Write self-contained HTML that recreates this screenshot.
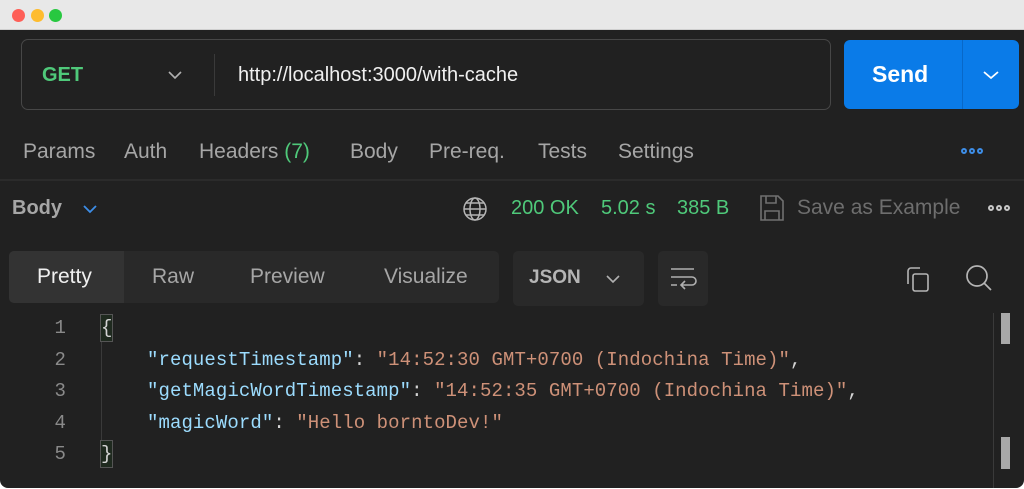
<!DOCTYPE html>
<html><head><meta charset="utf-8"><style>
*{margin:0;padding:0;box-sizing:border-box}
body{width:1024px;height:489px;background:#fff;font-family:"Liberation Sans",sans-serif;overflow:hidden;position:relative}
.title{position:absolute;left:0;top:0;width:1024px;height:30px;background:#e8e8e8;border-bottom:1px solid #cfcfcf}
.dot{position:absolute;top:9px;width:13px;height:13px;border-radius:50%}
.main{position:absolute;left:0;top:30px;width:1024px;height:458px;background:#212121;border-radius:0 0 8px 8px}
.a{position:absolute;white-space:nowrap}
.url{left:21px;top:9px;width:810px;height:71px;border:1px solid #474747;border-radius:7px}
.send{left:844px;top:10px;width:175px;height:69px;background:#0a7be8;border-radius:6px}
.tab{top:110px;font-size:21px;color:#a6a6a6}
.code{font-family:"Liberation Mono",monospace;font-size:19px;letter-spacing:0.08px}
.ln{color:#8a8a8a;width:40px;text-align:right;left:26px}
.k{color:#9cdcfe}.s{color:#ce9178}.p{color:#d4d4d4}
.o{position:absolute;width:6px;height:6px;border:2px solid;border-radius:50%}
</style></head><body>
<div class="title">
<div class="dot" style="left:12px;background:#fe5f57"></div>
<div class="dot" style="left:31px;background:#febc2e"></div>
<div class="dot" style="left:49px;background:#28c840"></div>
</div>
<div class="main">
<div class="a url">
 <div class="a" style="left:20px;top:24px;font-size:20px;font-weight:bold;color:#4fc97a">GET</div>
 <svg class="a" style="left:145px;top:30px" width="16" height="10"><path d="M2 2l6 6 6-6" stroke="#b0b0b0" stroke-width="1.6" fill="none"/></svg>
 <div class="a" style="left:192px;top:14px;width:1px;height:42px;background:#3a3a3a"></div>
 <div class="a" style="left:216px;top:24px;font-size:20px;color:#f0f0f0">http://localhost:3000/with-cache</div>
</div>
<div class="a send">
 <div class="a" style="left:28px;top:21px;font-size:23px;font-weight:bold;color:#fff">Send</div>
 <div class="a" style="left:118px;top:0;width:1px;height:69px;background:#0868c8"></div>
 <svg class="a" style="left:138px;top:30px" width="18" height="10"><path d="M2 2l7 6 7-6" stroke="#fff" stroke-width="1.8" fill="none"/></svg>
</div>
<div class="a tab" style="left:23px">Params</div>
<div class="a tab" style="left:124px">Auth</div>
<div class="a tab" style="left:199px">Headers <span style="color:#4fc97a">(7)</span></div>
<div class="a tab" style="left:350px">Body</div>
<div class="a tab" style="left:429px">Pre-req.</div>
<div class="a tab" style="left:538px">Tests</div>
<div class="a tab" style="left:618px">Settings</div>
<div class="o" style="left:961px;top:118px;color:#3d8ee8"></div><div class="o" style="left:969px;top:118px;color:#3d8ee8"></div><div class="o" style="left:977px;top:118px;color:#3d8ee8"></div>
<div class="a" style="left:0;top:149px;width:1024px;height:2px;background:#2b2b2b"></div>
<div class="a" style="left:12px;top:167px;font-size:20px;font-weight:bold;color:#a6a6a6">Body</div>
<svg class="a" style="left:82px;top:174px" width="16" height="10"><path d="M2 2l6 6 6-6" stroke="#3d8ee8" stroke-width="1.8" fill="none"/></svg>
<svg class="a" style="left:462px;top:166px" width="26" height="26" fill="none" stroke="#b5b5b5" stroke-width="1.5"><circle cx="13" cy="13" r="11"/><ellipse cx="13" cy="13" rx="5" ry="11"/><path d="M2 13h22M4 7h18M4 19h18"/></svg>
<div class="a" style="left:511px;top:167px;font-size:20px;color:#4fc97a">200 OK</div>
<div class="a" style="left:601px;top:167px;font-size:20px;color:#4fc97a">5.02 s</div>
<div class="a" style="left:677px;top:167px;font-size:20px;color:#4fc97a">385 B</div>
<svg class="a" style="left:759px;top:164px" width="26" height="28" fill="none" stroke="#707070" stroke-width="1.6"><path d="M2 2h17l5 5v19H2z"/><path d="M7 2v7h10V2M6 26v-9h14v9"/></svg>
<div class="a" style="left:797px;top:166px;font-size:21px;color:#6e6e6e">Save as Example</div>
<div class="o" style="left:988px;top:175px;color:#c8c8c8"></div><div class="o" style="left:996px;top:175px;color:#c8c8c8"></div><div class="o" style="left:1004px;top:175px;color:#c8c8c8"></div>
<div class="a" style="left:9px;top:221px;width:490px;height:52px;background:#292929;border-radius:5px;overflow:hidden">
 <div class="a" style="left:0;top:0;width:115px;height:52px;background:#333"></div>
 <div class="a" style="left:28px;top:14px;font-size:21px;color:#f0f0f0">Pretty</div>
 <div class="a" style="left:143px;top:14px;font-size:21px;color:#a6a6a6">Raw</div>
 <div class="a" style="left:241px;top:14px;font-size:21px;color:#a6a6a6">Preview</div>
 <div class="a" style="left:375px;top:14px;font-size:21px;color:#a6a6a6">Visualize</div>
</div>
<div class="a" style="left:513px;top:221px;width:131px;height:55px;background:#292929;border-radius:5px">
 <div class="a" style="left:16px;top:16px;font-size:19px;font-weight:bold;color:#b5b5b5">JSON</div>
 <svg class="a" style="left:92px;top:23px" width="16" height="10"><path d="M2 2l6 6 6-6" stroke="#b0b0b0" stroke-width="1.6" fill="none"/></svg>
</div>
<div class="a" style="left:658px;top:221px;width:50px;height:55px;background:#292929;border-radius:5px">
 <svg class="a" style="left:11px;top:15px" width="28" height="26" fill="none" stroke="#b0b0b0" stroke-width="1.6"><path d="M2 3h23M2 11h21a4 4 0 0 1 0 8h-10M16 15l-4 4 4 4M2 19h6"/></svg>
</div>
<svg class="a" style="left:904px;top:236px" width="28" height="28" fill="none" stroke="#b5b5b5" stroke-width="1.6"><path d="M4 18V5a3 3 0 0 1 3-3h9"/><rect x="9" y="8" width="15" height="17" rx="2"/></svg>
<svg class="a" style="left:964px;top:233px" width="30" height="30" fill="none" stroke="#b5b5b5" stroke-width="1.7"><circle cx="13" cy="13" r="10"/><path d="M20 20l7 7"/></svg>
<div class="a" style="left:100px;top:284px;width:13px;height:28px;border:1px solid #555;background:#1f2a1f"></div>
<div class="a" style="left:100px;top:410px;width:13px;height:28px;border:1px solid #555;background:#1f2a1f"></div>
<div class="a" style="left:101px;top:312px;width:1px;height:98px;background:#3a3a3a"></div>
<div class="a code ln" style="top:287px">1</div>
<div class="a code ln" style="top:319px">2</div>
<div class="a code ln" style="top:350px">3</div>
<div class="a code ln" style="top:382px">4</div>
<div class="a code ln" style="top:413px">5</div>
<div class="a code p" style="left:101px;top:287px">{</div>
<div class="a code" style="left:147px;top:319px"><span class="k">"requestTimestamp"</span><span class="p">: </span><span class="s">"14:52:30 GMT+0700 (Indochina Time)"</span><span class="p">,</span></div>
<div class="a code" style="left:147px;top:350px"><span class="k">"getMagicWordTimestamp"</span><span class="p">: </span><span class="s">"14:52:35 GMT+0700 (Indochina Time)"</span><span class="p">,</span></div>
<div class="a code" style="left:147px;top:382px"><span class="k">"magicWord"</span><span class="p">: </span><span class="s">"Hello borntoDev!"</span></div>
<div class="a code p" style="left:101px;top:413px">}</div>
<div class="a" style="left:993px;top:283px;width:1px;height:175px;background:#3a3a3a"></div>
<div class="a" style="left:1001px;top:283px;width:9px;height:31px;background:#a8a8a8"></div>
<div class="a" style="left:1001px;top:407px;width:9px;height:32px;background:#a8a8a8"></div>
</div>
</body></html>
